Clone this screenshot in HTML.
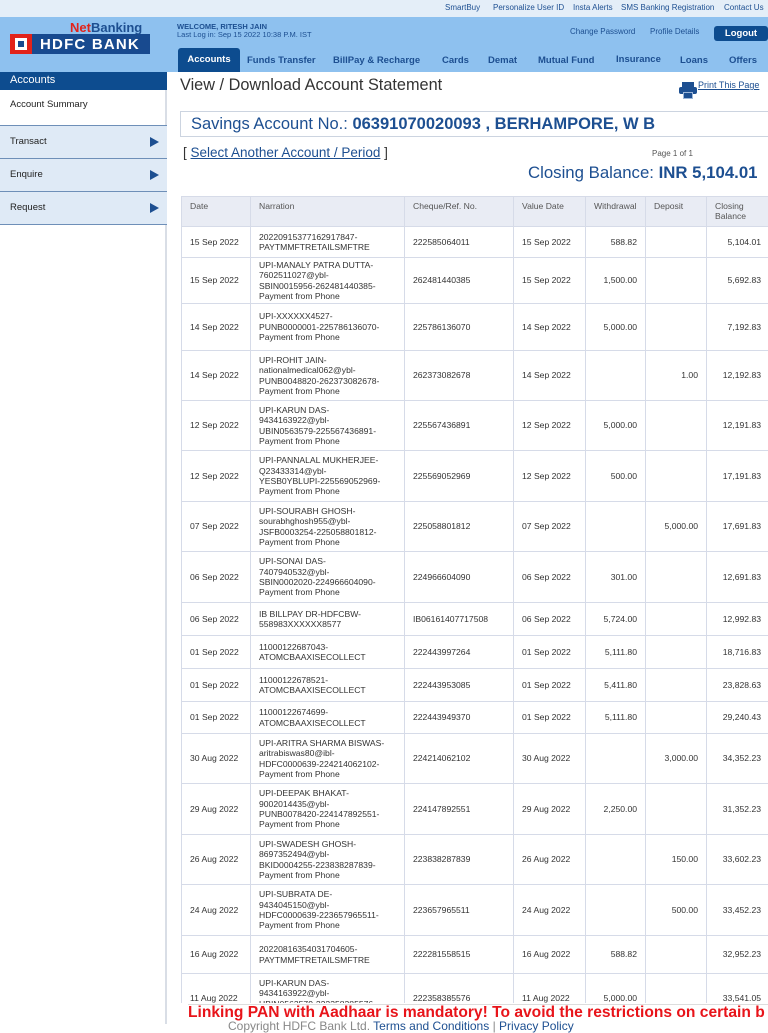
<!DOCTYPE html>
<html><head><meta charset="utf-8"><style>
*{margin:0;padding:0;box-sizing:border-box}
body{width:768px;height:1024px;overflow:hidden;background:#fff;font-family:"Liberation Sans",Arial,sans-serif;position:relative;color:#333}
.abs{position:absolute}
#top{left:0;top:0;width:768px;height:17px;background:#e4eef8;font-size:8px;color:#1d4f91}
#top span{position:absolute;top:3px}
#hdr{left:0;top:17px;width:768px;height:55px;background:#8ec1ef}
.nav{position:absolute;top:55px;font-size:9.5px;font-weight:bold;color:#1d4f91}
#side{left:0;top:72px;width:167px;height:952px;border-right:2px solid #d9dee6;background:#fff}
.sitem{position:absolute;left:0;width:167px;height:33px;background:#dfeaf6;border-top:1px solid #6e8fb8;font-size:9.5px;color:#222;padding:10px 0 0 10px}
.sitem b{position:absolute;right:8px;top:11px;width:0;height:0;border-left:9px solid #1d4f91;border-top:5px solid transparent;border-bottom:5px solid transparent}
table{position:absolute;left:181px;top:196px;width:588px;border-collapse:collapse;table-layout:fixed;font-size:8.6px;line-height:10.4px;color:#333}
td,th{border:1px solid #d6dbe8;padding:0 8px;vertical-align:middle;overflow:hidden;white-space:nowrap}
th{background:#e9ecf4;font-weight:normal;color:#555;vertical-align:top;padding-top:4px;text-align:left;height:30px}
td.r{text-align:right}
#tw{left:0;top:0;width:768px;height:1003px;overflow:hidden}
</style></head><body>
<div id="top" class="abs">
<span style="left:445px">SmartBuy</span><span style="left:493px">Personalize User ID</span><span style="left:573px">Insta Alerts</span><span style="left:621px">SMS Banking Registration</span><span style="left:724px">Contact Us</span>
</div>
<div id="hdr" class="abs">
<div class="abs" style="left:70px;top:3px;font-size:13px;font-weight:bold;color:#e2231a">Net<span style="color:#1d4f91">Banking</span></div>
<div class="abs" style="left:10px;top:17px;width:140px;height:20px;background:#184a8f">
 <div class="abs" style="left:0;top:0;width:22px;height:20px;background:#e2231a"></div>
 <div class="abs" style="left:5px;top:4px;width:12px;height:12px;background:#fff"></div>
 <div class="abs" style="left:8px;top:7px;width:6px;height:6px;background:#184a8f"></div>
 <div class="abs" style="left:30px;top:2px;font-size:15px;font-weight:bold;color:#fff;letter-spacing:1.2px">HDFC BANK</div>
</div>
<div class="abs" style="left:177px;top:6px;font-size:7.5px;color:#1d4f91;line-height:8px"><b>WELCOME, RITESH JAIN</b><br>Last Log in: Sep 15 2022 10:38 P.M. IST</div>
<div class="abs" style="left:570px;top:10px;font-size:8px;color:#1d4f91">Change Password</div>
<div class="abs" style="left:650px;top:10px;font-size:8px;color:#1d4f91">Profile Details</div>
<div class="abs" style="left:714px;top:9px;width:54px;height:15px;background:#0d4c8f;border-radius:3px;color:#fff;font-size:9.5px;font-weight:bold;text-align:center;line-height:15px">Logout</div>
<div class="abs" style="left:178px;top:31px;width:62px;height:24px;background:#0d4c8f;border-radius:3px 3px 0 0;color:#fff;font-size:9.5px;font-weight:bold;text-align:center;line-height:24px">Accounts</div>
<span class="nav" style="left:247px;top:38px">Funds Transfer</span>
<span class="nav" style="left:333px;top:38px">BillPay &amp; Recharge</span>
<span class="nav" style="left:442px;top:38px">Cards</span>
<span class="nav" style="left:488px;top:38px">Demat</span>
<span class="nav" style="left:538px;top:38px">Mutual Fund</span>
<span class="nav" style="left:616px;top:37px">Insurance</span>
<span class="nav" style="left:680px;top:38px">Loans</span>
<span class="nav" style="left:729px;top:38px">Offers</span>
</div>
<div id="side" class="abs">
<div class="abs" style="left:0;top:0;width:167px;height:18px;background:#0d4c8f;color:#fff;font-size:11px;padding:2px 0 0 10px">Accounts</div>
<div class="abs" style="left:10px;top:27px;font-size:9.5px;color:#222">Account Summary</div>
<div class="sitem" style="top:53px">Transact<b></b></div>
<div class="sitem" style="top:86px">Enquire<b></b></div>
<div class="sitem" style="top:119px;border-bottom:1px solid #6e8fb8;height:34px">Request<b></b></div>
</div>
<div class="abs" style="left:180px;top:76px;font-size:16.3px;color:#333">View / Download Account Statement</div>
<div class="abs" style="left:679px;top:82px;width:18px;height:16px">
 <div class="abs" style="left:3px;top:0;width:12px;height:5px;background:#1d4f91"></div>
 <div class="abs" style="left:0;top:5px;width:18px;height:7px;background:#1d4f91;border-radius:2px"></div>
 <div class="abs" style="left:4px;top:10px;width:10px;height:7px;background:#1d4f91;border:1px solid #9cb6d8"></div>
</div>
<div class="abs" style="left:698px;top:80px;font-size:9px;color:#1d4f91;text-decoration:underline">Print This Page</div>
<div class="abs" style="left:180px;top:111px;width:600px;height:26px;border:1px solid #ccd4e0;font-size:16.5px;color:#1d4f91;padding:3px 0 0 10px;white-space:nowrap">Savings Account No.: <b>06391070020093 , BERHAMPORE, W B</b></div>
<div class="abs" style="left:183px;top:145px;font-size:13.5px;color:#333;white-space:nowrap">[ <span style="color:#1d4f91;text-decoration:underline">Select Another Account / Period</span> ]</div>
<div class="abs" style="left:652px;top:149px;font-size:8px;color:#555">Page 1 of 1</div>
<div class="abs" style="left:528px;top:163px;font-size:16.8px;color:#1d4f91;white-space:nowrap">Closing Balance: <b>INR 5,104.01</b></div>
<div id="tw" class="abs">
<table>
<colgroup><col style="width:69px"><col style="width:154px"><col style="width:109px"><col style="width:72px"><col style="width:60px"><col style="width:61px"><col style="width:63px"></colgroup>
<tr><th>Date</th><th>Narration</th><th>Cheque/Ref. No.</th><th>Value Date</th><th>Withdrawal</th><th>Deposit</th><th>Closing<br>Balance</th></tr>
<tr style="height:31px"><td>15 Sep 2022</td><td>20220915377162917847-<br>PAYTMMFTRETAILSMFTRE</td><td>222585064011</td><td>15 Sep 2022</td><td class="r">588.82</td><td></td><td class="r">5,104.01</td></tr>
<tr style="height:46px"><td>15 Sep 2022</td><td>UPI-MANALY PATRA DUTTA-<br>7602511027@ybl-<br>SBIN0015956-262481440385-<br>Payment from Phone</td><td>262481440385</td><td>15 Sep 2022</td><td class="r">1,500.00</td><td></td><td class="r">5,692.83</td></tr>
<tr style="height:47px"><td>14 Sep 2022</td><td>UPI-XXXXXX4527-<br>PUNB0000001-225786136070-<br>Payment from Phone</td><td>225786136070</td><td>14 Sep 2022</td><td class="r">5,000.00</td><td></td><td class="r">7,192.83</td></tr>
<tr style="height:50px"><td>14 Sep 2022</td><td>UPI-ROHIT JAIN-<br>nationalmedical062@ybl-<br>PUNB0048820-262373082678-<br>Payment from Phone</td><td>262373082678</td><td>14 Sep 2022</td><td></td><td class="r">1.00</td><td class="r">12,192.83</td></tr>
<tr style="height:50px"><td>12 Sep 2022</td><td>UPI-KARUN DAS-<br>9434163922@ybl-<br>UBIN0563579-225567436891-<br>Payment from Phone</td><td>225567436891</td><td>12 Sep 2022</td><td class="r">5,000.00</td><td></td><td class="r">12,191.83</td></tr>
<tr style="height:51px"><td>12 Sep 2022</td><td>UPI-PANNALAL MUKHERJEE-<br>Q23433314@ybl-<br>YESB0YBLUPI-225569052969-<br>Payment from Phone</td><td>225569052969</td><td>12 Sep 2022</td><td class="r">500.00</td><td></td><td class="r">17,191.83</td></tr>
<tr style="height:50px"><td>07 Sep 2022</td><td>UPI-SOURABH GHOSH-<br>sourabhghosh955@ybl-<br>JSFB0003254-225058801812-<br>Payment from Phone</td><td>225058801812</td><td>07 Sep 2022</td><td></td><td class="r">5,000.00</td><td class="r">17,691.83</td></tr>
<tr style="height:51px"><td>06 Sep 2022</td><td>UPI-SONAI DAS-<br>7407940532@ybl-<br>SBIN0002020-224966604090-<br>Payment from Phone</td><td>224966604090</td><td>06 Sep 2022</td><td class="r">301.00</td><td></td><td class="r">12,691.83</td></tr>
<tr style="height:33px"><td>06 Sep 2022</td><td>IB BILLPAY DR-HDFCBW-<br>558983XXXXXX8577</td><td>IB06161407717508</td><td>06 Sep 2022</td><td class="r">5,724.00</td><td></td><td class="r">12,992.83</td></tr>
<tr style="height:33px"><td>01 Sep 2022</td><td>11000122687043-<br>ATOMCBAAXISECOLLECT</td><td>222443997264</td><td>01 Sep 2022</td><td class="r">5,111.80</td><td></td><td class="r">18,716.83</td></tr>
<tr style="height:33px"><td>01 Sep 2022</td><td>11000122678521-<br>ATOMCBAAXISECOLLECT</td><td>222443953085</td><td>01 Sep 2022</td><td class="r">5,411.80</td><td></td><td class="r">23,828.63</td></tr>
<tr style="height:32px"><td>01 Sep 2022</td><td>11000122674699-<br>ATOMCBAAXISECOLLECT</td><td>222443949370</td><td>01 Sep 2022</td><td class="r">5,111.80</td><td></td><td class="r">29,240.43</td></tr>
<tr style="height:50px"><td>30 Aug 2022</td><td>UPI-ARITRA SHARMA BISWAS-<br>aritrabiswas80@ibl-<br>HDFC0000639-224214062102-<br>Payment from Phone</td><td>224214062102</td><td>30 Aug 2022</td><td></td><td class="r">3,000.00</td><td class="r">34,352.23</td></tr>
<tr style="height:51px"><td>29 Aug 2022</td><td>UPI-DEEPAK BHAKAT-<br>9002014435@ybl-<br>PUNB0078420-224147892551-<br>Payment from Phone</td><td>224147892551</td><td>29 Aug 2022</td><td class="r">2,250.00</td><td></td><td class="r">31,352.23</td></tr>
<tr style="height:50px"><td>26 Aug 2022</td><td>UPI-SWADESH GHOSH-<br>8697352494@ybl-<br>BKID0004255-223838287839-<br>Payment from Phone</td><td>223838287839</td><td>26 Aug 2022</td><td></td><td class="r">150.00</td><td class="r">33,602.23</td></tr>
<tr style="height:51px"><td>24 Aug 2022</td><td>UPI-SUBRATA DE-<br>9434045150@ybl-<br>HDFC0000639-223657965511-<br>Payment from Phone</td><td>223657965511</td><td>24 Aug 2022</td><td></td><td class="r">500.00</td><td class="r">33,452.23</td></tr>
<tr style="height:38px"><td>16 Aug 2022</td><td>20220816354031704605-<br>PAYTMMFTRETAILSMFTRE</td><td>222281558515</td><td>16 Aug 2022</td><td class="r">588.82</td><td></td><td class="r">32,952.23</td></tr>
<tr style="height:50px"><td>11 Aug 2022</td><td>UPI-KARUN DAS-<br>9434163922@ybl-<br>UBIN0563579-222358385576-<br>Payment from Phone</td><td>222358385576</td><td>11 Aug 2022</td><td class="r">5,000.00</td><td></td><td class="r">33,541.05</td></tr>
</table>
</div>
<div class="abs" style="left:188px;top:1004px;width:580px;height:1px;background:#ddd"></div>
<div class="abs" style="left:188px;top:1004px;font-size:15.6px;font-weight:bold;color:#e8141a;white-space:nowrap">Linking PAN with Aadhaar is mandatory! To avoid the restrictions on certain b</div>
<div class="abs" style="left:228px;top:1019px;font-size:12px;color:#888;white-space:nowrap">Copyright HDFC Bank Ltd. <span style="color:#1d4f91">Terms and Conditions</span> | <span style="color:#1d4f91">Privacy Policy</span></div>
</body></html>
